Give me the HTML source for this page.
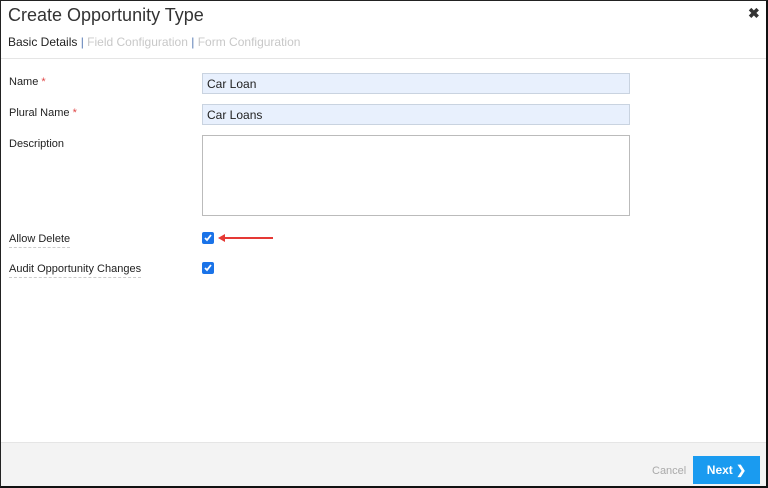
<!DOCTYPE html>
<html><head><style>
*{box-sizing:border-box;margin:0;padding:0}
body{width:768px;height:488px;background:#fff;font-family:"Liberation Sans",sans-serif;position:relative;overflow:hidden}
.frame{position:absolute;left:0;top:0;width:768px;height:488px;border:1px solid #222;border-right:2px solid #111;border-bottom:2px solid #111}
.title{position:absolute;left:8px;top:5px;font-size:18px;color:#333}
.close{position:absolute;left:748px;top:5px;font-size:14px;font-weight:bold;color:#333}
.tabs{position:absolute;left:8px;top:35px;font-size:12px;color:#222}
.tabs .d{color:#c8c8c8}.tabs .s{color:#5a7db5}
.hr{position:absolute;left:1px;right:2px;top:58px;border-top:1px solid #e5e5e5}
.lbl{position:absolute;left:9px;font-size:11px;color:#222}
.lbl .r{color:#e04848}
.dot{border-bottom:1px dashed #ccc;padding-bottom:2px}
.in{position:absolute;left:202px;width:428px;height:21px;background:#e8f0fd;border:1px solid #c9d3e0;font-size:12px;color:#222;padding:3px 4px}
.ta{position:absolute;left:202px;top:135px;width:428px;height:81px;border:1px solid #bbb;background:#fff}
.cb{position:absolute;left:202px;width:12px;height:12px;background:#1a73e8;border-radius:2px}
.cb svg{position:absolute;left:1px;top:1px}
.foot{position:absolute;left:1px;right:2px;top:442px;bottom:2px;background:#f3f3f3;border-top:1px solid #e5e5e5}
.cancel{position:absolute;left:652px;top:465px;font-size:11px;color:#aaa}
.next{position:absolute;left:693px;top:456px;width:67px;height:28px;background:#1a9bf0;color:#fff;font-size:12px;font-weight:bold;text-align:center;line-height:28px}
</style></head><body>
<div class="title">Create Opportunity Type</div>
<div class="close">✖</div>
<div class="tabs">Basic Details <span class="s">|</span> <span class="d">Field Configuration</span> <span class="s">|</span> <span class="d">Form Configuration</span></div>
<div class="hr"></div>
<div class="lbl" style="top:76px">Name <span class="r">*</span></div>
<div class="in" style="top:73px">Car Loan</div>
<div class="lbl" style="top:107px">Plural Name <span class="r">*</span></div>
<div class="in" style="top:104px">Car Loans</div>
<div class="lbl" style="top:138px">Description</div>
<div class="ta"></div>
<div class="lbl" style="top:233px"><span class="dot">Allow Delete</span></div>
<div class="cb" style="top:232px"><svg width="10" height="10" viewBox="0 0 10 10"><path d="M2 5l2 2 4-5" stroke="#fff" stroke-width="1.8" fill="none"/></svg></div>
<svg style="position:absolute;left:216px;top:233px" width="60" height="10"><path d="M4 5H57" stroke="#e53935" stroke-width="2"/><path d="M2 5l7-4v8z" fill="#e53935"/></svg>
<div class="lbl" style="top:263px"><span class="dot">Audit Opportunity Changes</span></div>
<div class="cb" style="top:262px"><svg width="10" height="10" viewBox="0 0 10 10"><path d="M2 5l2 2 4-5" stroke="#fff" stroke-width="1.8" fill="none"/></svg></div>
<div class="foot"></div>
<div class="cancel">Cancel</div>
<div class="next">Next ❯</div>
<div class="frame"></div>
</body></html>
